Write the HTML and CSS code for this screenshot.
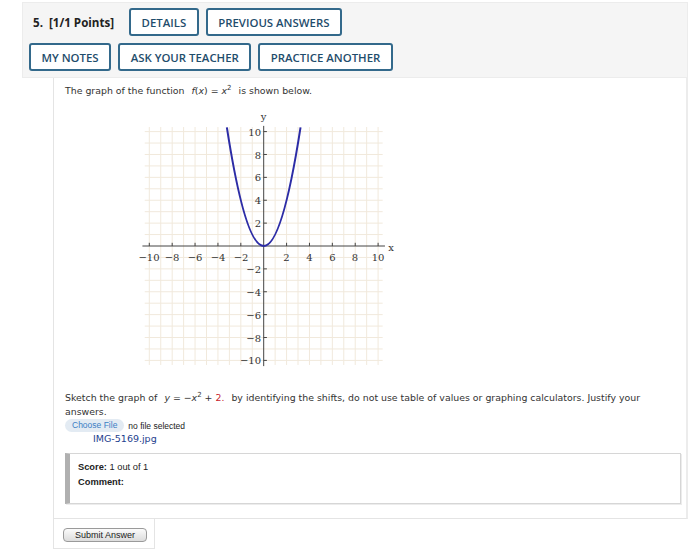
FILE: index.html
```html
<!DOCTYPE html>
<html>
<head>
<meta charset="utf-8">
<link rel="stylesheet" href="styles.css">
</head>
<body>
<div class="question">
  <div class="qhead">
    <div class="row">
      <span class="qnum">5.&nbsp; [1/1 Points]</span>
      <span class="btn">DETAILS</span>
      <span class="btn">PREVIOUS ANSWERS</span>
    </div>
    <div class="row">
      <span class="btn">MY NOTES</span>
      <span class="btn">ASK YOUR TEACHER</span>
      <span class="btn">PRACTICE ANOTHER</span>
    </div>
  </div>
  <div class="qbody">
    <p class="txt first">The graph of the function <span class="m"><i>f</i>(<i>x</i>) = <i>x</i><sup>2</sup></span> is shown below.</p>
    <svg class="graph" width="262" height="264" viewBox="0 0 262 264">
      <g transform="translate(126.7 138) scale(11.44 -11.44)" fill="none">
        <g stroke="#f1e9dc" stroke-width="1">
          <path vector-effect="non-scaling-stroke" d="M-10 -10.4V10.4M-9 -10.4V10.4M-8 -10.4V10.4M-7 -10.4V10.4M-6 -10.4V10.4M-5 -10.4V10.4M-4 -10.4V10.4M-3 -10.4V10.4M-2 -10.4V10.4M-1 -10.4V10.4M1 -10.4V10.4M2 -10.4V10.4M3 -10.4V10.4M4 -10.4V10.4M5 -10.4V10.4M6 -10.4V10.4M7 -10.4V10.4M8 -10.4V10.4M9 -10.4V10.4M10 -10.4V10.4"/>
          <path vector-effect="non-scaling-stroke" d="M-10.4 -10H10.4M-10.4 -9H10.4M-10.4 -8H10.4M-10.4 -7H10.4M-10.4 -6H10.4M-10.4 -5H10.4M-10.4 -4H10.4M-10.4 -3H10.4M-10.4 -2H10.4M-10.4 -1H10.4M-10.4 1H10.4M-10.4 2H10.4M-10.4 3H10.4M-10.4 4H10.4M-10.4 5H10.4M-10.4 6H10.4M-10.4 7H10.4M-10.4 8H10.4M-10.4 9H10.4M-10.4 10H10.4"/>
        </g>
        <path stroke="#444" stroke-width="1" vector-effect="non-scaling-stroke" d="M-10.6 0H10.6M0 -10.5V10.5"/>
        <path stroke="#444" stroke-width="1" vector-effect="non-scaling-stroke" d="M-10 0V0.28M-8 0V0.28M-6 0V0.28M-4 0V0.28M-2 0V0.28M2 0V0.28M4 0V0.28M6 0V0.28M8 0V0.28M10 0V0.28M0 -10H0.28M0 -8H0.28M0 -6H0.28M0 -4H0.28M0 -2H0.28M0 2H0.28M0 4H0.28M0 6H0.28M0 8H0.28M0 10H0.28"/>
        <path stroke="#2c2ca6" stroke-width="2" vector-effect="non-scaling-stroke" d="M-3.22 10.37Q0 -10.37 3.22 10.37"/>
      </g>
      <g class="lbl">
        <text x="126.5" y="12" text-anchor="middle">y</text>
        <text x="254" y="143" text-anchor="middle">x</text>
        <text x="12" y="153" text-anchor="middle">−10</text>
        <text x="35" y="153" text-anchor="middle">−8</text>
        <text x="58" y="153" text-anchor="middle">−6</text>
        <text x="81" y="153" text-anchor="middle">−4</text>
        <text x="104" y="153" text-anchor="middle">−2</text>
        <text x="149.5" y="153" text-anchor="middle">2</text>
        <text x="172.5" y="153" text-anchor="middle">4</text>
        <text x="195.5" y="153" text-anchor="middle">6</text>
        <text x="218" y="153" text-anchor="middle">8</text>
        <text x="241" y="153" text-anchor="middle">10</text>
        <text x="124" y="27.5" text-anchor="end">10</text>
        <text x="124" y="50.5" text-anchor="end">8</text>
        <text x="124" y="73.4" text-anchor="end">6</text>
        <text x="124" y="96.3" text-anchor="end">4</text>
        <text x="124" y="119.2" text-anchor="end">2</text>
        <text x="124" y="164.9" text-anchor="end">−2</text>
        <text x="124" y="187.8" text-anchor="end">−4</text>
        <text x="124" y="210.6" text-anchor="end">−6</text>
        <text x="124" y="233.5" text-anchor="end">−8</text>
        <text x="124" y="256.4" text-anchor="end">−10</text>
      </g>
    </svg>
    <p class="txt sketch">Sketch the graph of <span class="m"><i>y</i> = −<i>x</i><sup>2</sup> + <span class="red">2.</span></span> by identifying the shifts, do not use table of values or graphing calculators. Justify your answers.</p>
    <div class="upload">
      <span class="choose">Choose File</span>
      <span class="nofile">no file selected</span>
    </div>
    <div class="fname">IMG-5169.jpg</div>
    <div class="score">
      <div><b>Score:</b> 1 out of 1</div>
      <div><b>Comment:</b></div>
    </div>
  </div>
  <div class="submitwrap">
    <span class="submit">Submit Answer</span>
  </div>
</div>
</body>
</html>
```
FILE: styles.css
```css
html, body {
  margin: 0;
  padding: 0;
  background: #fff;
}
.question {
  margin: 2px 0 0 22px;
  width: 666px;
}
.qhead {
  background: #f5f5f5;
  border: 1px solid #ececec;
  padding: 5px 6px 6px;
  display: flex;
  flex-direction: column;
  gap: 7px;
}
.row {
  display: flex;
  align-items: center;
  gap: 7px;
}
.qnum {
  font-family: "Open Sans", sans-serif;
  font-weight: 700;
  font-size: 11.6px;
  color: #222;
  padding: 0 8px 0 4px;
}
.btn {
  box-sizing: border-box;
  height: 28px;
  display: inline-flex;
  align-items: center;
  padding: 0 10.5px;
  border: 2px solid #33698b;
  border-radius: 3px;
  background: #fff;
  color: #1f4d6c;
  font-family: "Open Sans", sans-serif;
  font-weight: 600;
  font-size: 11.4px;
}
.qbody {
  margin-left: 31px;
  border-left: 1px solid #e4e4e4;
  border-right: 2px solid #ececec;
  border-bottom: 1px solid #e4e4e4;
  padding: 6px 5px 14px 11px;
  font-family: "DejaVu Sans", Verdana, sans-serif;
  font-size: 9.4px;
  color: #333;
}
.txt {
  margin: 0;
  line-height: 14px;
}
.m {
  margin: 0 4px;
}
.txt sup {
  font-size: 7px;
  line-height: 0;
  vertical-align: 4px;
}
.txt i {
  font-style: italic;
}
.graph {
  display: block;
  margin: 10px 0 0 72px;
}
.lbl {
  font-family: "DejaVu Serif", serif;
  font-size: 10px;
  fill: #333;
}
.sketch {
  margin-top: 19px;
  padding-right: 30px;
}
.red {
  color: #c8232c;
}
.upload {
  display: flex;
  align-items: center;
  gap: 4px;
  margin-top: 0;
  font-family: "Liberation Sans", Arial, sans-serif;
  font-size: 8.5px;
}
.choose {
  background: #e3ebf3;
  color: #3b7ec4;
  border-radius: 7px;
  padding: 1px 7px;
  line-height: 11px;
}
.nofile {
  color: #222;
}
.fname {
  margin: 1px 0 0 28px;
  color: #1d3e8e;
  font-size: 9.5px;
  line-height: 12px;
}
.score {
  margin-top: 8px;
  border: 1px solid #d6d6d6;
  border-left: 5px solid #b0b0b0;
  box-shadow: 1px 1px 0 #ececec;
  padding: 6px 8px 13px;
  font-family: "Liberation Sans", Arial, sans-serif;
  font-size: 9.3px;
  color: #222;
  line-height: 15px;
}
.submitwrap {
  margin-left: 31px;
  width: 102px;
  height: 30px;
  border-left: 1px solid #e4e4e4;
  border-right: 1px solid #e4e4e4;
  border-bottom: 1px solid #e4e4e4;
  box-sizing: border-box;
  padding: 9px 0 0 9px;
}
.submit {
  display: block;
  box-sizing: border-box;
  width: 84px;
  height: 14px;
  border: 1px solid #9a9a9a;
  border-radius: 4px;
  background: linear-gradient(#fbfbfb, #dcdcdc);
  font-family: "Liberation Sans", Arial, sans-serif;
  font-size: 9px;
  line-height: 12px;
  text-align: center;
  color: #222;
}
```
